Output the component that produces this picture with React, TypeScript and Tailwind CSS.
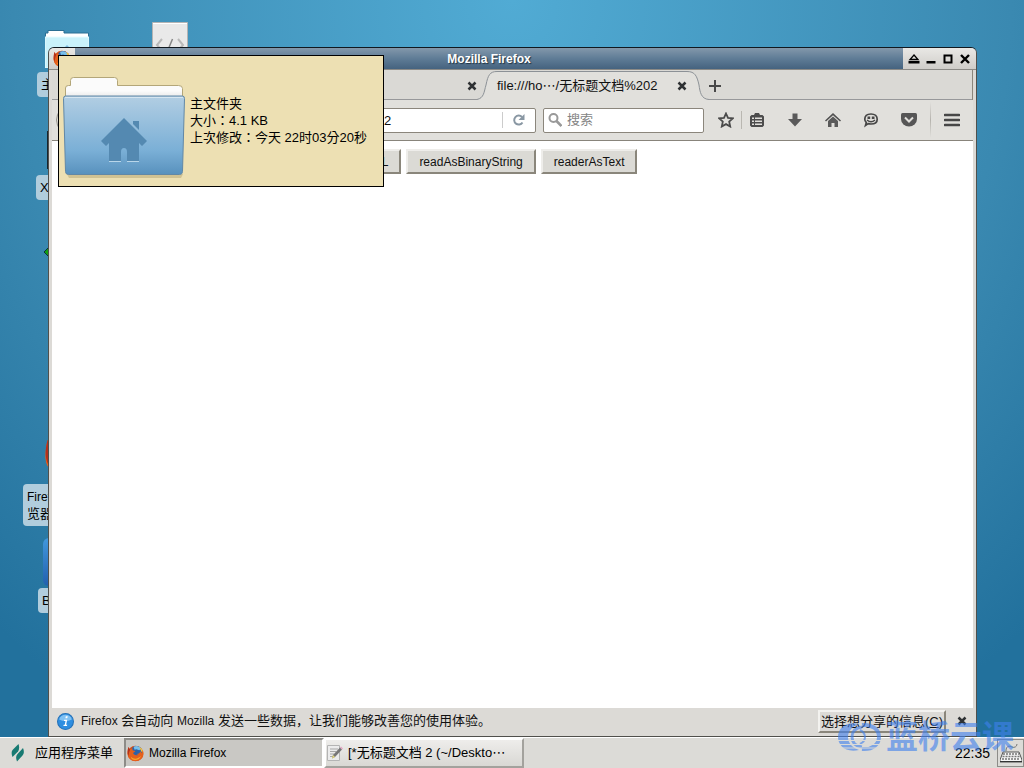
import { useState, type ReactNode } from 'react';

const SANS = "font-['Liberation_Sans','Noto_Sans_CJK_SC',sans-serif]";

function FirefoxIcon({ className }: { className?: string }) {
  return (
    <svg viewBox="0 0 18 18" className={className} aria-hidden="true">
      <circle cx="9" cy="9" r="8.300" fill="#d94f17" />
      <circle cx="10" cy="7" r="6" fill="#2c62a8" />
      <path d="M7 1.800C10 .3 13.500 1.500 15 4l-2 1.500-3-1-2 .5z" fill="#79bfea" />
      <path d="M13 2c3 1.500 4.500 4 4.300 7.500-.8-1.500-1.800-2-2.500-3.500z" fill="#f6c53f" />
      <path d="M1.500 2c.3 1.200.9 2 1.500 2.500 1-.8 2-1 3.200-.8-.6.8-.5 1.500.1 2l2.500.6c-.3 1-1.300 1.300-2.300 1.900.2 2.300 3.300 3.600 5.700 2-1 .1-1.800-.2-2.400-.8 2.300.2 4-.9 4.200-2.900 1 .8 1.300 1.700 1.300 2.300.9-1 1-2.300.6-3.800 1.500 1.900 1.900 4.500 1.100 6.800-1.300 3.300-4.400 5.300-7.900 5.200C4.400 16.900.9 14 .6 9.500.5 6.700.9 4 1.500 2z" fill="#e4601c" />
      <path d="M4 12.500c3 3 8 2.500 11-1-1 3-3.500 4.500-6.500 4.500-2.500 0-4-1.300-4.500-3.500z" fill="#f9a72b" />
      <path d="M1.500 2c-1 3.500-1.200 7 .2 10 .2-3 .5-5 1.600-7z" fill="#b4301b" />
    </svg>
  );
}

function HomeFolder({ className }: { className?: string }) {
  return (
    <svg viewBox="0 0 126 106" className={className} aria-hidden="true">
      <defs>
        <linearGradient id="folderFront" x1="0" y1="0" x2="0" y2="1">
          <stop offset="0" stopColor="#b2cee3" />
          <stop offset=".7" stopColor="#7aafd6" />
          <stop offset="1" stopColor="#5891bd" />
        </linearGradient>
        <linearGradient id="folderBack" x1="0" y1="0" x2="0" y2="1">
          <stop offset=".6" stopColor="#fbfbfb" />
          <stop offset="1" stopColor="#e2e2e2" />
        </linearGradient>
      </defs>
      <path d="M5 99h116l-2 4H7z" fill="#8f7f4a" opacity=".3" />
      <path d="M3.500 24V13q0-2.500 3-2.500h2v-5q0-3 3-3h41q3 0 3 3v5h61q4 0 4 3v11z" fill="url(#folderBack)" stroke="#b3a679" />
      <path d="M1.500 23.500q0-2.500 2-2.500h117q2 0 2 2.500l-2 73q0 3-3 3h-111q-3 0-3-3z" fill="url(#folderFront)" stroke="#6288a6" />
      <path d="M3 22.500h118" stroke="#d5e5f0" />
      <path d="M62 43l23 23-5 5-3-3v18H65v-9q0-4-3-4t-3 4v9H47V68l-3 3-5-5z" fill="#5489b1" />
      <path d="M71 46h6v9l-6-6z" fill="#5489b1" />
      <path d="M47 86.500h12M65 86.500h12" stroke="#b8d6ea" />
    </svg>
  );
}

function DesktopLabel({ children, className }: { children: ReactNode; className: string }) {
  return (
    <span className={`absolute rounded-[4px] bg-[#b1cddd] px-1 py-1 text-center text-[13px] leading-[17px] whitespace-nowrap text-black ${className}`}>
      {children}
    </span>
  );
}

function DesktopIcons() {
  return (
    <div>
      <svg viewBox="0 0 44 38" className="absolute top-[30px] left-[45px] h-[38px] w-11" aria-hidden="true">
        <path d="M.5 7V3H3V.500h16V3h24.500v7H.500z" fill="#fff" stroke="#2b6f94" />
        <path d="M0 7h44v31H0z" fill="#c9f2fb" stroke="#e8fbff" />
        <path d="M22 15l9 9H13z" fill="#7fbbe0" />
      </svg>
      <DesktopLabel className="top-[72px] left-[37px]">主文件夹</DesktopLabel>

      <svg viewBox="0 0 36 44" className="absolute top-[22px] left-[152px] h-11 w-9" aria-hidden="true">
        <path d="M.5.500h35v43H.500z" fill="#e9e9e9" stroke="#b4b4b4" />
        <path d="M1 1.500h34" stroke="#fff" />
        <path d="M10 17l-5 6 5 6M26 17l5 6-5 6" fill="none" stroke="#b9b9b9" strokeWidth="2" />
        <path d="M20.500 17l-5 12" stroke="#858585" strokeWidth="1.500" />
      </svg>

      <div className="absolute top-[131px] left-[47px] h-[38px] w-10 bg-[#17242c]" />
      <DesktopLabel className="top-[175px] left-[36px]">Xfce 终端</DesktopLabel>

      <svg viewBox="0 0 40 40" className="absolute top-[232px] left-[43px] size-10" aria-hidden="true">
        <path d="M20 1l19 19-19 19L1 20z" fill="#12a012" stroke="#0b2e3c" />
      </svg>

      <FirefoxIcon className="absolute top-[435px] left-[44px] size-11" />
      <DesktopLabel className="top-[484px] left-[23px]">
        <span className="text-xs">Firefox</span> 网络浏
        <br />
        <span className="block text-left">览器</span>
      </DesktopLabel>

      <div className="absolute top-[538px] left-[43px] size-12 rounded-[6px] bg-linear-to-b from-[#4298dd] to-[#2360ae]" />
      <DesktopLabel className="top-[588px] left-[38px]">Brackets</DesktopLabel>
    </div>
  );
}

function TitleBar() {
  return (
    <div className="flex h-[22px] shrink-0 border-b border-[#8b8a86] bg-linear-to-b from-[#8398ab] via-[#5f7c96] to-[#45637f]">
      <div className="w-[26px] bg-linear-to-b from-[#e9e8e5] to-[#cfcdc9] pl-1">
        <FirefoxIcon className="mt-0.5 size-[18px]" />
      </div>
      <h1 className="flex-1 pt-px text-center text-xs leading-[21px] font-bold text-white [text-shadow:1px_1px_1px_#1f3344]">
        Mozilla Firefox
      </h1>
      <div className="flex items-center gap-[3px] bg-linear-to-b from-[#e9e8e5] to-[#cfcdc9] px-1">
        <button type="button" aria-label="Shade">
          <svg viewBox="0 0 14 14" className="size-[14px]">
            <path d="M7 3l4 4.500H3z" fill="none" stroke="#000" strokeWidth="1.300" />
            <path d="M1.500 9h11v2.500h-11z" />
          </svg>
        </button>
        <button type="button" aria-label="Minimize">
          <svg viewBox="0 0 14 14" className="size-[14px]"><path d="M2.500 9h9v2.500h-9z" /></svg>
        </button>
        <button type="button" aria-label="Maximize">
          <svg viewBox="0 0 14 14" className="size-[14px]"><path d="M3.500 3.500h7v7h-7z" fill="none" stroke="#000" strokeWidth="2" /></svg>
        </button>
        <button type="button" aria-label="Close">
          <svg viewBox="0 0 14 14" className="size-[14px]"><path d="M3 3l8 8M11 3l-8 8" stroke="#000" strokeWidth="2.400" /></svg>
        </button>
      </div>
    </div>
  );
}

function CloseGlyph() {
  return (
    <svg viewBox="0 0 10 10" className="size-[10px]">
      <path d="M1.500 1.500l7 7M8.500 1.500l-7 7" stroke="#2e3133" strokeWidth="2.500" />
    </svg>
  );
}

// DejaVu has the mid-height dots
function Ellipsis() {
  return <span className="font-['DejaVu_Sans',sans-serif] leading-none">⋯</span>;
}

function TabStrip() {
  return (
    <div className="flex h-[30px] shrink-0 border-r border-[#8b867c] bg-[#dad9d5]">
      <div className="flex w-[425px] shrink-0 items-center justify-end border-b border-[#97989a] pt-0.5">
        <button type="button" aria-label="Close tab"><CloseGlyph /></button>
      </div>
      <svg viewBox="0 0 20 30" className="h-[30px] w-5 shrink-0" aria-hidden="true">
        <path d="M0 30C7 29 7 22 9 15C11 5 13 1.500 20 1.500V30z" fill="#e1e0dc" />
        <path d="M0 29.500C7 28 7 22 9 15C11 5 13 1.500 20 1.500" fill="none" stroke="#8c9196" />
      </svg>
      <div className="mt-px flex w-[190px] shrink-0 items-center justify-between border-t border-[#8c9196] bg-[#e1e0dc] text-[13px] whitespace-nowrap">
        <span>file:///ho<Ellipsis />/无标题文档%202</span>
        <button type="button" aria-label="Close tab"><CloseGlyph /></button>
      </div>
      <svg viewBox="0 0 22 30" className="h-[30px] w-[22px] shrink-0" aria-hidden="true">
        <path d="M0 30V1.500C8 1.500 10 6 12 15C13 22 14 29 22 30z" fill="#e1e0dc" />
        <path d="M0 1.500C8 1.500 10 6 12 15C13 22 14 29 22 29.500" fill="none" stroke="#8c9196" />
      </svg>
      <div className="flex flex-1 items-center border-b border-[#97989a] pt-0.5">
        <button type="button" aria-label="New tab">
          <svg viewBox="0 0 12 12" className="size-3"><path d="M6 0v12M0 6h12" stroke="#484848" strokeWidth="2" /></svg>
        </button>
      </div>
    </div>
  );
}

function ToolButton({ label, children }: { label: string; children: ReactNode }) {
  return (
    <button type="button" aria-label={label} className="flex size-[38px] shrink-0 items-center justify-center">
      <svg viewBox="0 0 16 16" className="size-4">{children}</svg>
    </button>
  );
}

function NavBar() {
  const [url, setUrl] = useState('file:///home/shiyanlou/Desktop/无标题文档%202');
  const [query, setQuery] = useState('');

  return (
    <div className="flex h-[41px] shrink-0 items-center border-b border-[#88847b] bg-[#e1e0dc] pl-1 text-[13px]">
      <button type="button" aria-label="Back" className="size-[30px] shrink-0 rounded-full border border-[#97948c]" />
      <div className="flex h-[25px] flex-1 items-center rounded-[2px] border border-[#8b867c] bg-white">
        <input
          aria-label="Address"
          value={url}
          onChange={(e) => setUrl(e.target.value)}
          className="h-full min-w-0 flex-1 pb-px pl-[29px] outline-none"
        />
        <button type="button" aria-label="Reload" className="flex h-4 w-[33px] items-center justify-center border-l border-[#cccccc]">
          <svg viewBox="0 0 12 12" className="size-3">
            <path d="M9.500 8.500A4.500 4.500 0 1 1 9 3" fill="none" stroke="#8997a3" strokeWidth="2" />
            <path d="M11.500 0v6h-6z" fill="#8997a3" />
          </svg>
        </button>
      </div>
      <div className="ml-[7px] flex h-[25px] w-[161px] shrink-0 items-center rounded-[2px] border border-[#8b867c] bg-white pl-1">
        <svg viewBox="0 0 14 14" className="size-[14px] shrink-0" aria-hidden="true">
          <circle cx="5.500" cy="5" r="4" fill="none" stroke="#999" strokeWidth="2" />
          <path d="M8.500 8l5 5" stroke="#999" strokeWidth="2.600" />
        </svg>
        <input
          aria-label="搜索"
          placeholder="搜索"
          value={query}
          onChange={(e) => setQuery(e.target.value)}
          className="h-full min-w-0 flex-1 pb-px pl-[5px] outline-none placeholder:text-[#858585]"
        />
      </div>
      <button type="button" aria-label="Bookmark" className="ml-[11px] flex h-[18px] w-[26px] shrink-0 items-center pl-[3px]">
        <svg viewBox="0 0 16 16" className="size-4">
          <path d="M8 1.500l2 4.400 4.800.5-3.600 3.200 1 4.900L8 12.100l-4.200 2.400 1-4.900L1.200 6.400 6 5.900z" fill="none" stroke="#4b4b4b" strokeWidth="1.800" />
        </svg>
      </button>
      <div className="-mr-1 h-[18px] w-px shrink-0 bg-[#b9b7b1]" />
      <ToolButton label="Bookmarks list">
        <path d="M6 1h4l1 2h2.500L15 4.500v9L13.500 15h-11L1 13.500v-9L2.500 3H5z" fill="#4d4d4d" />
        <path d="M3 5.500h10v1.500H3zM3 8.500h10V10H3zM3 11.500h10V13H3z" fill="#e1e0dc" />
        <path d="M5.500 5v8" stroke="#4d4d4d" />
      </ToolButton>
      <ToolButton label="Downloads"><path d="M5.500 1.500h5V7H15l-7 7.500L1 7h4.500z" fill="#5a5a5a" /></ToolButton>
      <ToolButton label="Home">
        <path d="M8 1l8 7.500-1 1L8 3.200 1 9.500l-1-1z" fill="#505050" />
        <path d="M8 4.500L13 9v6H9.500v-4h-3v4H3V9z" fill="#5a5a5a" />
      </ToolButton>
      <ToolButton label="Chat">
        <path d="M8 2C12 2 14.200 4.200 14.200 7.200S12 12 8 12c-1 0-2-.1-2.800-.4L2.500 13.500l.8-3C2.200 9.600 1.800 8.500 1.800 7.200 1.800 4.200 4 2 8 2z" fill="#e1e0dc" stroke="#474747" strokeWidth="1.700" />
        <path d="M4.500 4.500h2.700V7H4.500zM8.800 4.500h2.700V7H8.800z" fill="#474747" />
        <path d="M4 8q4 3.500 8 0" fill="none" stroke="#474747" strokeWidth="1.400" />
      </ToolButton>
      <ToolButton label="Pocket">
        <path d="M1.500 1h13Q16 1 16 2.500V7a8 7.500 0 0 1-16 0V2.500Q0 1 1.500 1z" fill="#565656" />
        <path d="M4 5.500l4 4 4-4" fill="none" stroke="#e1e0dc" strokeWidth="2" />
      </ToolButton>
      <div className="ml-0.5 h-9 w-px shrink-0 bg-linear-to-b from-transparent via-[#b5b3ad] to-transparent" />
      <button type="button" aria-label="Open menu" className="flex h-[38px] w-[42px] shrink-0 items-center justify-center">
        <svg viewBox="0 0 16 14" className="h-[14px] w-4">
          <path d="M1 2h14M1 7h14M1 12h14" stroke="#474747" strokeWidth="2.600" strokeLinecap="round" />
        </svg>
      </button>
    </div>
  );
}

function PageButton({ children }: { children: ReactNode }) {
  return (
    <button type="button" className="h-[25px] border-2 border-t-[#eeedea] border-r-[#8a867b] border-b-[#8a867b] border-l-[#eeedea] bg-[#dbdad5] px-[11px] text-xs">
      {children}
    </button>
  );
}

function BrowserWindow() {
  return (
    <section className="absolute top-[47px] right-[47px] bottom-0 left-12 flex flex-col overflow-hidden rounded-t-[6px] border border-[#50504c] border-t-[#10181f] bg-[#dcdad6] text-[#111]">
      <TitleBar />
      <div className="mr-[3px] ml-[3px] flex min-h-0 flex-1 flex-col">
        <TabStrip />
        <NavBar />
        <main className="flex min-h-0 flex-1 items-start gap-[5px] bg-white px-2 pt-2">
          <input type="file" aria-label="File" className="w-[223px] text-xs" />
          <PageButton>readAsDataURL</PageButton>
          <PageButton>readAsBinaryString</PageButton>
          <PageButton>readerAsText</PageButton>
        </main>
        <div className="flex h-7 shrink-0 items-center pr-[6px] pb-0.5 pl-[5px] text-[13px]">
          <svg viewBox="0 0 16 16" className="size-[17px] shrink-0" aria-hidden="true">
            <circle cx="8" cy="8" r="7.500" fill="#2f8ee0" stroke="#2672b8" />
            <path d="M2 6a6.300 6.300 0 0 1 12 0Q8 9 2 6z" fill="#7fc1f3" />
            <path d="M8.300 3h1.800l-.4 1.900H7.900zM6.700 6.300h2.900L8.600 11h1.100l-.3 1.200H6l.3-1.200h1l.7-3.500H6.500z" fill="#fff" />
          </svg>
          <p className="ml-[7px] flex-1 whitespace-nowrap">
            <span className="text-xs">Firefox</span> 会自动向 <span className="text-xs">Mozilla</span> 发送一些数据，让我们能够改善您的使用体验。
          </p>
          <button type="button" className="h-[23px] border-2 border-t-[#f3f2ef] border-r-[#8a867b] border-b-[#8a867b] border-l-[#f3f2ef] px-px text-[13px] leading-[17px]">
            选择想分享的信息(<span className="underline">C</span>)
          </button>
          <button type="button" aria-label="Dismiss" className="ml-[11px]"><CloseGlyph /></button>
        </div>
      </div>
    </section>
  );
}

function FolderTooltip() {
  return (
    <div role="tooltip" className="absolute top-[55px] left-[58px] flex h-[132px] w-[326px] items-center border border-black bg-[#ede0b3] pl-[3px]">
      <HomeFolder className="mb-[5px] h-[106px] w-[126px] shrink-0 self-end" />
      <p className="ml-0.5 pb-0.5 font-['Liberation_Sans','Noto_Sans_CJK_TC',sans-serif] text-[13px] leading-[17px] whitespace-nowrap text-black">
        主文件夹
        <br />
        大小：4.1 KB
        <br />
        上次修改：今天 22时03分20秒
      </p>
    </div>
  );
}

function Taskbar() {
  return (
    <footer className="flex h-[31px] shrink-0 items-center border-t border-white bg-[#dcdbd7] text-[13px] text-black">
      <button type="button" className="flex h-full w-[124px] items-center pl-[11px]">
        <svg viewBox="0 0 14 18" className="mr-[10px] h-[18px] w-[14px]" aria-hidden="true">
          <path d="M7.500 0q1.500 4.500-.5 7.500l-5.500 5.500Q-.5 8 2 5.500z" fill="#187a72" />
          <path d="M12 4q2 4.500-.5 7.500L6 17.500Q4 12.500 6.500 10z" fill="#187a72" />
        </svg>
        应用程序菜单
      </button>
      <button type="button" className="flex h-[30px] w-[200px] items-center gap-[5px] border-2 border-t-[#8d8c88] border-r-white border-b-white border-l-[#8d8c88] bg-[#c9c8c4] pl-px text-xs">
        <FirefoxIcon className="size-[17px]" />
        Mozilla Firefox
      </button>
      <button type="button" className="flex h-[30px] w-[200px] items-center gap-[5px] border-2 border-t-white border-r-[#a3a29d] border-b-[#a3a29d] border-l-white bg-linear-to-b from-[#eeedeb] to-[#d9d8d4] pl-px whitespace-nowrap">
        <svg viewBox="0 0 16 16" className="size-4" aria-hidden="true">
          <path d="M.5.500h12v15H.500z" fill="#ececec" stroke="#b4b4b4" />
          <path d="M3 4h8M3 6.500h6M3 9h4M3 11.500h3" stroke="#a8a8a8" />
          <path d="M13 2.500l2 2-7 7.500-3 1.500 1-3.500z" fill="#777" />
          <path d="M13 2.500l1-1 2 2-1 1z" fill="#e4a4c4" />
          <path d="M6 10l2 2-3 1.500z" fill="#e5d87a" />
        </svg>
        <span>[*无标题文档 2 (~/Deskto<Ellipsis /></span>
      </button>
      <time className="mr-[7px] ml-auto text-sm">22:35</time>
      <button type="button" aria-label="Keyboard" className="flex h-7 w-[27px] items-center justify-center border border-[#8d8c88]">
        <svg viewBox="0 0 22 20" className="h-5 w-[22px]">
          <path d="M6 8C6 2 10 3 12 4s5 0 5-3" fill="none" stroke="#777" />
          <path d="M3 9h16l3 8v2H0v-2z" fill="#f6f6f6" stroke="#555" />
          <path d="M3 11h16M2.500 13.500h17M2 16h18" stroke="#777" strokeWidth="1.500" strokeDasharray="2 1" />
          <path d="M0 18.500h22" stroke="#333" />
        </svg>
      </button>
    </footer>
  );
}

function Watermark() {
  return (
    <div className="pointer-events-none absolute right-[10px] bottom-[14px] flex items-center gap-[5px] text-[#3f80ee] opacity-60">
      <svg viewBox="0 0 44 30" className="h-[30px] w-11" aria-hidden="true">
        <path d="M22 2C8 -1 1 7 1 15s7 16 21 13C14 25 11 20 11 15S14 5 22 2z" fill="currentColor" />
        <path d="M25 5c-8 1-10 6-10 10s2 9 10 10" fill="none" stroke="currentColor" strokeWidth="3" />
        <path d="M23 8c4 2 5 4 5 7s-1 5-5 7" fill="none" stroke="currentColor" strokeWidth="2" />
        <path d="M25 3c11-1 17 5 17 12s-6 13-17 12" fill="none" stroke="currentColor" strokeWidth="4" />
        <path d="M0 18.500h44M0 22.500h44M0 26h44" stroke="#dcdbd7" />
      </svg>
      <span className="text-[32px] leading-[34px] font-bold">蓝桥云课</span>
    </div>
  );
}

export default function App() {
  return (
    <div className={`relative flex h-screen flex-col overflow-hidden bg-[radial-gradient(ellipse_75%_110%_at_50%_0%,#51abd4_0%,#3a89b1_65%,#22719d_100%)] ${SANS}`}>
      <div className="relative min-h-0 flex-1">
        <DesktopIcons />
        <BrowserWindow />
        <FolderTooltip />
      </div>
      <Taskbar />
      <Watermark />
    </div>
  );
}
